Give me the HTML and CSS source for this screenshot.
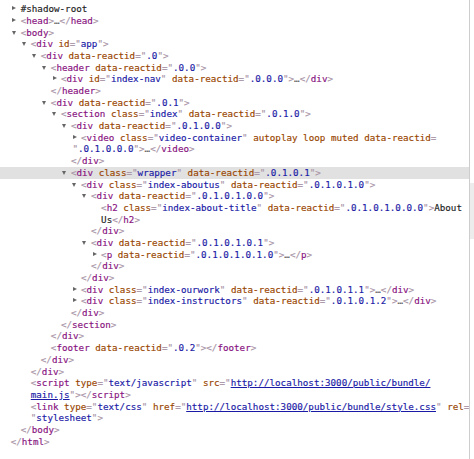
FILE: index.html
```html
<!DOCTYPE html>
<html>
<head>
<meta charset="utf-8">
<link rel="stylesheet" href="styles.css">
</head>
<body>
<div class="panel">
  <div class="tree">
    <div class="r lv0 closed"><span class="tw"></span><span class="x">#shadow-root</span></div>
    <div class="r lv0 closed"><span class="tw"></span><span class="b">&lt;</span><span class="t">head</span><span class="b">&gt;</span><span class="e">…</span><span class="b">&lt;/</span><span class="t">head</span><span class="b">&gt;</span></div>
    <div class="r lv0 open"><span class="tw"></span><span class="b">&lt;</span><span class="t">body</span><span class="b">&gt;</span></div>
    <div class="r lv1 open"><span class="tw"></span><span class="b">&lt;</span><span class="t">div</span> <span class="an">id</span><span class="b">="</span><span class="av">app</span><span class="b">"&gt;</span></div>
    <div class="r lv2 open"><span class="tw"></span><span class="b">&lt;</span><span class="t">div</span> <span class="an">data-reactid</span><span class="b">="</span><span class="av">.0</span><span class="b">"&gt;</span></div>
    <div class="r lv3 open"><span class="tw"></span><span class="b">&lt;</span><span class="t">header</span> <span class="an">data-reactid</span><span class="b">="</span><span class="av">.0.0</span><span class="b">"&gt;</span></div>
    <div class="r lv4 closed"><span class="tw"></span><span class="b">&lt;</span><span class="t">div</span> <span class="an">id</span><span class="b">="</span><span class="av">index-nav</span><span class="b">"</span> <span class="an">data-reactid</span><span class="b">="</span><span class="av">.0.0.0</span><span class="b">"&gt;</span><span class="e">…</span><span class="b">&lt;/</span><span class="t">div</span><span class="b">&gt;</span></div>
    <div class="r lv3"><span class="b">&lt;/</span><span class="t">header</span><span class="b">&gt;</span></div>
    <div class="r lv3 open"><span class="tw"></span><span class="b">&lt;</span><span class="t">div</span> <span class="an">data-reactid</span><span class="b">="</span><span class="av">.0.1</span><span class="b">"&gt;</span></div>
    <div class="r lv4 open"><span class="tw"></span><span class="b">&lt;</span><span class="t">section</span> <span class="an">class</span><span class="b">="</span><span class="av">index</span><span class="b">"</span> <span class="an">data-reactid</span><span class="b">="</span><span class="av">.0.1.0</span><span class="b">"&gt;</span></div>
    <div class="r lv5 open"><span class="tw"></span><span class="b">&lt;</span><span class="t">div</span> <span class="an">data-reactid</span><span class="b">="</span><span class="av">.0.1.0.0</span><span class="b">"&gt;</span></div>
    <div class="r lv6 closed"><span class="tw"></span><span class="b">&lt;</span><span class="t">video</span> <span class="an">class</span><span class="b">="</span><span class="av">video-container</span><span class="b">"</span> <span class="an">autoplay</span> <span class="an">loop</span> <span class="an">muted</span> <span class="an">data-reactid</span><span class="b">=</span><br><span class="b">"</span><span class="av">.0.1.0.0.0</span><span class="b">"&gt;</span><span class="e">…</span><span class="b">&lt;/</span><span class="t">video</span><span class="b">&gt;</span></div>
    <div class="r lv5"><span class="b">&lt;/</span><span class="t">div</span><span class="b">&gt;</span></div>
    <div class="r lv5 open sel"><span class="tw"></span><span class="b">&lt;</span><span class="t">div</span> <span class="an">class</span><span class="b">="</span><span class="av">wrapper</span><span class="b">"</span> <span class="an">data-reactid</span><span class="b">="</span><span class="av">.0.1.0.1</span><span class="b">"&gt;</span></div>
    <div class="r lv6 open"><span class="tw"></span><span class="b">&lt;</span><span class="t">div</span> <span class="an">class</span><span class="b">="</span><span class="av">index-aboutus</span><span class="b">"</span> <span class="an">data-reactid</span><span class="b">="</span><span class="av">.0.1.0.1.0</span><span class="b">"&gt;</span></div>
    <div class="r lv7 open"><span class="tw"></span><span class="b">&lt;</span><span class="t">div</span> <span class="an">data-reactid</span><span class="b">="</span><span class="av">.0.1.0.1.0.0</span><span class="b">"&gt;</span></div>
    <div class="r lv8"><span class="b">&lt;</span><span class="t">h2</span> <span class="an">class</span><span class="b">="</span><span class="av">index-about-title</span><span class="b">"</span> <span class="an">data-reactid</span><span class="b">="</span><span class="av">.0.1.0.1.0.0.0</span><span class="b">"&gt;</span><span class="x">About</span><br><span class="x">Us</span><span class="b">&lt;/</span><span class="t">h2</span><span class="b">&gt;</span></div>
    <div class="r lv7"><span class="b">&lt;/</span><span class="t">div</span><span class="b">&gt;</span></div>
    <div class="r lv7 open"><span class="tw"></span><span class="b">&lt;</span><span class="t">div</span> <span class="an">data-reactid</span><span class="b">="</span><span class="av">.0.1.0.1.0.1</span><span class="b">"&gt;</span></div>
    <div class="r lv8 closed"><span class="tw"></span><span class="b">&lt;</span><span class="t">p</span> <span class="an">data-reactid</span><span class="b">="</span><span class="av">.0.1.0.1.0.1.0</span><span class="b">"&gt;</span><span class="e">…</span><span class="b">&lt;/</span><span class="t">p</span><span class="b">&gt;</span></div>
    <div class="r lv7"><span class="b">&lt;/</span><span class="t">div</span><span class="b">&gt;</span></div>
    <div class="r lv6"><span class="b">&lt;/</span><span class="t">div</span><span class="b">&gt;</span></div>
    <div class="r lv6 closed"><span class="tw"></span><span class="b">&lt;</span><span class="t">div</span> <span class="an">class</span><span class="b">="</span><span class="av">index-ourwork</span><span class="b">"</span> <span class="an">data-reactid</span><span class="b">="</span><span class="av">.0.1.0.1.1</span><span class="b">"&gt;</span><span class="e">…</span><span class="b">&lt;/</span><span class="t">div</span><span class="b">&gt;</span></div>
    <div class="r lv6 closed"><span class="tw"></span><span class="b">&lt;</span><span class="t">div</span> <span class="an">class</span><span class="b">="</span><span class="av">index-instructors</span><span class="b">"</span> <span class="an">data-reactid</span><span class="b">="</span><span class="av">.0.1.0.1.2</span><span class="b">"&gt;</span><span class="e">…</span><span class="b">&lt;/</span><span class="t">div</span><span class="b">&gt;</span></div>
    <div class="r lv5"><span class="b">&lt;/</span><span class="t">div</span><span class="b">&gt;</span></div>
    <div class="r lv4"><span class="b">&lt;/</span><span class="t">section</span><span class="b">&gt;</span></div>
    <div class="r lv3"><span class="b">&lt;/</span><span class="t">div</span><span class="b">&gt;</span></div>
    <div class="r lv3"><span class="b">&lt;</span><span class="t">footer</span> <span class="an">data-reactid</span><span class="b">="</span><span class="av">.0.2</span><span class="b">"&gt;&lt;/</span><span class="t">footer</span><span class="b">&gt;</span></div>
    <div class="r lv2"><span class="b">&lt;/</span><span class="t">div</span><span class="b">&gt;</span></div>
    <div class="r lv1"><span class="b">&lt;/</span><span class="t">div</span><span class="b">&gt;</span></div>
    <div class="r lv1"><span class="b">&lt;</span><span class="t">script</span> <span class="an">type</span><span class="b">="</span><span class="av">text/javascript</span><span class="b">"</span> <span class="an">src</span><span class="b">="</span><a class="lk">http://localhost:3000/public/bundle/</a><br><a class="lk">main.js</a><span class="b">"&gt;&lt;/</span><span class="t">script</span><span class="b">&gt;</span></div>
    <div class="r lv1"><span class="b">&lt;</span><span class="t">link</span> <span class="an">type</span><span class="b">="</span><span class="av">text/css</span><span class="b">"</span> <span class="an">href</span><span class="b">="</span><a class="lk">http://localhost:3000/public/bundle/style.css</a><span class="b">"</span> <span class="an">rel</span><span class="b">=</span><br><span class="b">"</span><span class="av">stylesheet</span><span class="b">"&gt;</span></div>
    <div class="r lv0"><span class="b">&lt;/</span><span class="t">body</span><span class="b">&gt;</span></div>
    <div class="r lvm"><span class="b">&lt;/</span><span class="t">html</span><span class="b">&gt;</span></div>
  </div>
  <div class="scroll"><div class="thumb"></div></div>
</div>
</body>
</html>
```
FILE: styles.css
```css
html, body {
  margin: 0;
  padding: 0;
  background: #fff;
}

.panel {
  display: flex;
  width: 474px;
  height: 459px;
  overflow: hidden;
}

.tree {
  width: 470px;
  flex: none;
  padding-top: 3.2px;
  overflow: hidden;
  border-right: 1px solid #cdcdcd;
  font-family: "DejaVu Sans Mono", "Liberation Mono", monospace;
  font-size: 9.22px;
  line-height: 11.68px;
  white-space: nowrap;
  color: #222;
  box-sizing: border-box;
  -webkit-text-stroke: 0.15px currentColor;
}

.scroll {
  flex: 1;
  padding-top: 183px;
}

.thumb {
  height: 56px;
  background: #ececec;
}

.r {
  padding-left: var(--x);
}

.r.open, .r.closed {
  padding-left: calc(var(--x) - 8.6px);
}

.lvm { --x: 10.7px; }
.lv0 { --x: 20.7px; }
.lv1 { --x: 30.75px; }
.lv2 { --x: 40.8px; }
.lv3 { --x: 50.85px; }
.lv4 { --x: 60.9px; }
.lv5 { --x: 70.95px; }
.lv6 { --x: 81px; }
.lv7 { --x: 91.05px; }
.lv8 { --x: 101.1px; }

.sel {
  background: #e1e1e1;
}

.tw {
  display: inline-block;
  width: 8.6px;
  height: 11.68px;
  vertical-align: top;
  position: relative;
}

.tw::before {
  content: "";
  position: absolute;
  width: 0;
  height: 0;
}

.closed .tw::before {
  left: 0.4px;
  top: 3.1px;
  border-left: 4.8px solid #666;
  border-top: 2.8px solid transparent;
  border-bottom: 2.8px solid transparent;
}

.open .tw::before {
  left: 0;
  top: 4px;
  border-top: 4.4px solid #666;
  border-left: 2.9px solid transparent;
  border-right: 2.9px solid transparent;
}

.t { color: rgb(136, 18, 128); }
.b { color: rgb(168, 148, 166); }
.an { color: rgb(153, 69, 0); }
.av { color: rgb(26, 26, 166); }
.x { color: #1e1e1e; }
.e { color: #5a5a5a; }

.lk {
  color: rgb(26, 26, 166);
  text-decoration: underline;
}
```
